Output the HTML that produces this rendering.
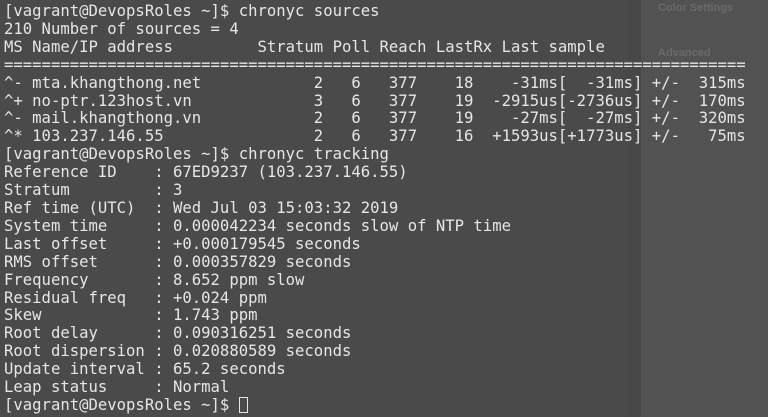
<!DOCTYPE html>
<html><head><meta charset="utf-8"><style>
html,body{margin:0;padding:0;width:768px;height:417px;overflow:hidden;background:#4a4a4a;}
.panel{position:absolute;left:641px;top:0;width:127px;height:417px;background:#525252;}
.strip{position:absolute;left:628px;top:0;width:13px;height:417px;background:#474747;}
.pt{position:absolute;left:658px;font:bold 11px "Liberation Sans",sans-serif;color:#6a6a6a;}
pre{position:absolute;left:4px;top:3px;margin:0;font-family:"DejaVu Sans Mono",monospace;font-size:15.6px;line-height:17.9px;color:#e6e6e6;white-space:pre;}
.cur{display:inline-block;width:9px;height:16px;border:1px solid #e6e6e6;vertical-align:-3px;box-sizing:border-box;}
</style></head><body>
<div class="strip"></div><div class="panel"></div>
<div class="pt" style="top:2px">Color Settings</div>
<div class="pt" style="top:47px">Advanced</div>
<pre>[vagrant@DevopsRoles ~]$ chronyc sources
210 Number of sources = 4
MS Name/IP address         Stratum Poll Reach LastRx Last sample
===============================================================================
^- mta.khangthong.net            2   6   377    18    -31ms[  -31ms] +/-  315ms
^+ no-ptr.123host.vn             3   6   377    19  -2915us[-2736us] +/-  170ms
^- mail.khangthong.vn            2   6   377    19    -27ms[  -27ms] +/-  320ms
^* 103.237.146.55                2   6   377    16  +1593us[+1773us] +/-   75ms
[vagrant@DevopsRoles ~]$ chronyc tracking
Reference ID    : 67ED9237 (103.237.146.55)
Stratum         : 3
Ref time (UTC)  : Wed Jul 03 15:03:32 2019
System time     : 0.000042234 seconds slow of NTP time
Last offset     : +0.000179545 seconds
RMS offset      : 0.000357829 seconds
Frequency       : 8.652 ppm slow
Residual freq   : +0.024 ppm
Skew            : 1.743 ppm
Root delay      : 0.090316251 seconds
Root dispersion : 0.020880589 seconds
Update interval : 65.2 seconds
Leap status     : Normal
[vagrant@DevopsRoles ~]$ <span class="cur"></span></pre>
</body></html>
